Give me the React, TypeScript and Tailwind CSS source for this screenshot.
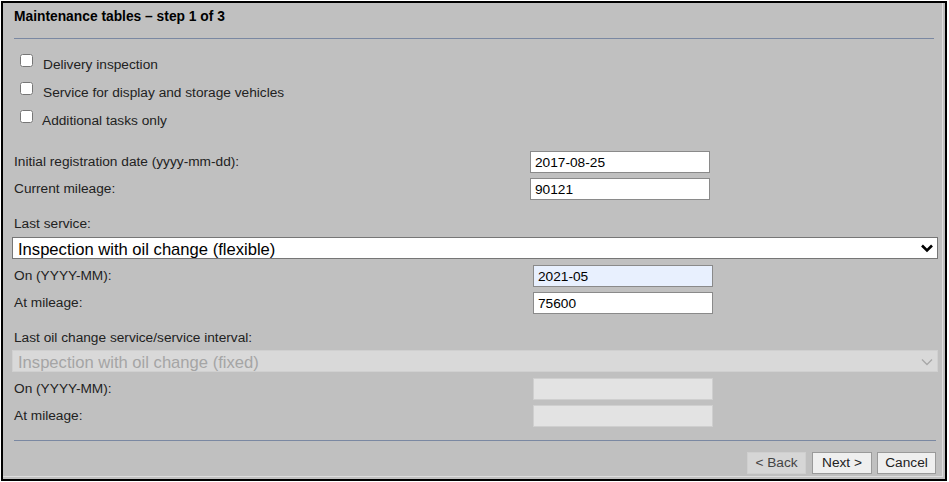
import React from "react";

const font = { fontFamily: '"Liberation Sans", Arial, sans-serif' };

function Chevron({ color, width }: { color: string; width: number }) {
  return (
    <svg width="14" height="10" viewBox="0 0 14 10" className="pointer-events-none block">
      <polyline points="2,2.5 7,7.5 12,2.5" fill="none" stroke={color} strokeWidth={width} />
    </svg>
  );
}

function Row({
  label,
  value,
  labelW,
  variant,
}: {
  label: string;
  value: string;
  labelW: string;
  variant: "normal" | "auto" | "disabled";
}) {
  const inputCls =
    variant === "normal"
      ? "bg-white border-[#8a8a8a] text-black"
      : variant === "auto"
      ? "bg-[#e8f0fe] border-[#8a8a8a] text-black"
      : "bg-[#e3e3e3] border-[#cfcfcf] text-black";
  return (
    <div className="flex items-center h-[22px]">
      <div className={`${labelW} shrink-0 pl-[2px] text-[13.7px] text-[#222]`}>{label}</div>
      <input
        readOnly
        disabled={variant === "disabled"}
        value={value}
        className={`block w-[180px] h-[22px] border ${inputCls} pl-[4px] text-[13.7px] outline-none`}
        style={font}
      />
    </div>
  );
}

export default function App() {
  return (
    <div className="bg-white w-[949px] h-[482px] pl-[1px] pt-[1px]" style={font}>
      <div className="w-[946px] h-[480px] border-2 border-black bg-[#c0c0c0]">
        <div className="w-[940px] h-[474px] border-r border-b border-[#dedede] pl-[9px] pt-[6px]">
          <div className="pl-[2px] h-[16px] leading-[16px] text-[13.8px] font-bold text-black">
            Maintenance tables – step 1 of 3
          </div>
          <div className="mt-[13px] ml-[2px] w-[920px] h-[1px] bg-[#7a88a2]" />

          <div className="mt-[12px] flex flex-col">
            {["Delivery inspection", "Service for display and storage vehicles", "Additional tasks only"].map(
              (t, i) => (
                <div key={t} className="flex items-center h-[28px]">
                  <input
                    type="checkbox"
                    className="m-0 ml-[8px] mb-[9px] w-[13px] h-[13px]"
                  />
                  <span className={`${i === 2 ? "ml-[9px]" : "ml-[10px]"} text-[13.7px] text-[#222]`}>{t}</span>
                </div>
              )
            )}
          </div>

          <div className="mt-[16px] flex flex-col gap-[5px]">
            <Row label="Initial registration date (yyyy-mm-dd):" value="2017-08-25" labelW="w-[518px]" variant="normal" />
            <Row label="Current mileage:" value="90121" labelW="w-[518px]" variant="normal" />
          </div>

          <div className="mt-[16px] pl-[2px] h-[16px] leading-[16px] text-[13.7px] text-[#222]">Last service:</div>
          <div className="relative mt-[5px] w-[926px] h-[22px]">
            <select
              className="block appearance-none w-[926px] h-[22px] bg-white border border-[#767676] pl-[5px] text-[16.6px] text-black outline-none"
              style={font}
              defaultValue="a"
            >
              <option value="a">Inspection with oil change (flexible)</option>
            </select>
            <div className="absolute right-[4px] top-[6px]">
              <Chevron color="#000" width={2.6} />
            </div>
          </div>

          <div className="mt-[6px] flex flex-col gap-[5px]">
            <Row label="On (YYYY-MM):" value="2021-05" labelW="w-[521px]" variant="auto" />
            <Row label="At mileage:" value="75600" labelW="w-[521px]" variant="normal" />
          </div>

          <div className="mt-[16px] pl-[2px] h-[16px] leading-[16px] text-[13.7px] text-[#222]">
            Last oil change service/service interval:
          </div>
          <div className="relative mt-[4px] w-[926px] h-[22px]">
            <select
              disabled
              className="block appearance-none w-[926px] h-[22px] bg-[#d9d9d9] border border-[#d0d0d0] pl-[5px] text-[16.6px] text-[#a5a5a5] outline-none"
              style={font}
              defaultValue="a"
            >
              <option value="a">Inspection with oil change (fixed)</option>
            </select>
            <div className="absolute right-[4px] top-[7px]">
              <Chevron color="#a8a8a8" width={1.4} />
            </div>
          </div>

          <div className="mt-[6px] flex flex-col gap-[5px]">
            <Row label="On (YYYY-MM):" value="" labelW="w-[521px]" variant="disabled" />
            <Row label="At mileage:" value="" labelW="w-[521px]" variant="disabled" />
          </div>

          <div className="mt-[13px] ml-[2px] w-[922px] h-[1px] bg-[#7a88a2]" />

          <div className="mt-[11px] w-[924px] flex justify-end gap-[5px]">
            <button
              className="block w-[59px] h-[22px] mr-[1px] bg-[#d6d6d6] border border-[#cfcfcf] text-[13.7px] text-[#444]"
              style={font}
            >
              &lt; Back
            </button>
            <button
              className="block w-[60px] h-[22px] bg-[#efefef] border border-[#9a9a9a] text-[13.7px] text-[#222]"
              style={font}
            >
              Next &gt;
            </button>
            <button
              className="block w-[59px] h-[22px] bg-[#efefef] border border-[#9a9a9a] text-[13.7px] text-[#222]"
              style={font}
            >
              Cancel
            </button>
          </div>
        </div>
      </div>
    </div>
  );
}
